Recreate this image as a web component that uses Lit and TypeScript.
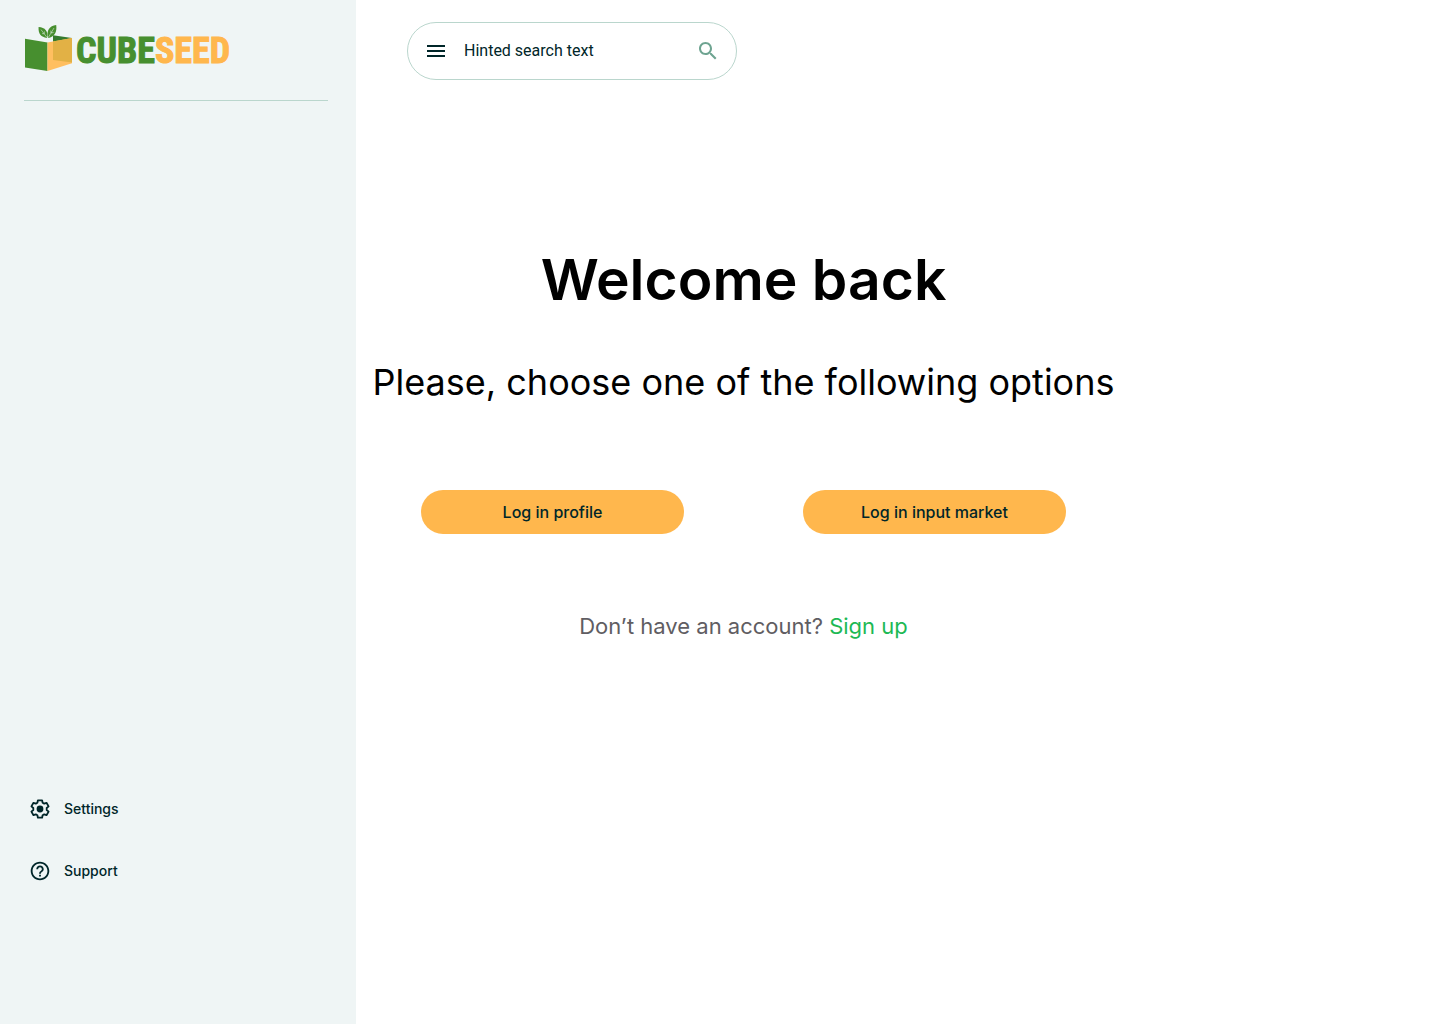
import { LitElement, html, css, svg } from "lit";
import { customElement } from "lit/decorators.js";

const logoMark = html`
  <svg class="mark" viewBox="-1 0 48 48" aria-hidden="true">
    <path fill="#357a2e" d="M28 11.2 L47 14 V39 L28 36 Z" />
    <path fill="#478f2f" d="M0 14.7 L22.5 18.4 V47 L0 43.6 Z" />
    <path fill="#ffbf60" d="M22.5 18.4 L47 14 V39.2 L22.5 47 Z" />
    <path fill="#e2b145" d="M28 17.4 L47 14 V38.5 L28 36 Z" />
    <path fill="#478f2f" d="M22 14 C16 13.2 13 9.5 13.6 3 C20 3.2 23.6 7.5 22 14 Z" />
    <path fill="#478f2f" d="M23 14 C21.2 6.5 24.5 1.6 31.2 1 C32.2 8 29.5 13 23 14 Z" />
    <path fill="none" stroke="#eff5f5" stroke-width=".5" d="M16 5.6 L22 13.5 M29 4 L23.3 13.5 M25.8 6.5 L26 9 L28.6 8.4 M17 9.6 L19.2 9.8 L19.4 7.4" />
  </svg>`;

const icons = {
  menu: svg`<path d="M3 18h18v-2H3v2zm0-5h18v-2H3v2zm0-7v2h18V6H3z"/>`,
  search: svg`<path d="M15.5 14h-.79l-.28-.27C15.41 12.59 16 11.11 16 9.5 16 5.91 13.09 3 9.5 3S3 5.91 3 9.5 5.91 16 9.5 16c1.61 0 3.09-.59 4.23-1.57l.27.28v.79l5 4.99L20.49 19l-4.99-5zm-6 0C7.01 14 5 11.99 5 9.5S7.01 5 9.5 5 14 7.01 14 9.5 11.99 14 9.5 14z"/>`,
  settings: svg`
    <g transform="translate(12 12)">
      <path fill="none" stroke="currentColor" stroke-width="1.8" stroke-linejoin="round"
        d="M-2.1 -8.7 H2.1 L2.6 -6.3 L4.2 -5.4 L6.5 -6.2 L8.6 -2.6 L6.7 -.95 V.95 L8.6 2.6 L6.5 6.2 L4.2 5.4 L2.6 6.3 L2.1 8.7 H-2.1 L-2.6 6.3 L-4.2 5.4 L-6.5 6.2 L-8.6 2.6 L-6.7 .95 V-.95 L-8.6 -2.6 L-6.5 -6.2 L-4.2 -5.4 L-2.6 -6.3 Z"/>
      <circle r="3.4"/>
    </g>`,
  help: svg`<g transform="translate(.84 .84) scale(.93)"><path d="M11 18h2v-2h-2v2zm1-16C6.48 2 2 6.48 2 12s4.48 10 10 10 10-4.48 10-10S17.52 2 12 2zm0 18c-4.41 0-8-3.59-8-8s3.59-8 8-8 8 3.59 8 8-3.59 8-8 8zm0-14c-2.21 0-4 1.79-4 4h2c0-1.1.9-2 2-2s2 .9 2 2c0 2-3 1.75-3 5h2c0-2.25 3-2.5 3-5 0-2.21-1.79-4-4-4z"/></g>`,
};

const icon = (name: keyof typeof icons) =>
  html`<svg class="icon" viewBox="0 0 24 24" aria-hidden="true">${icons[name]}</svg>`;

@customElement("app-root")
export class AppRoot extends LitElement {
  static styles = css`
    :host {
      display: block;
      font-family: Inter, "Liberation Sans", sans-serif;
      color: #000;
    }
    * {
      box-sizing: border-box;
    }
    .page {
      display: flex;
      min-height: 100vh;
      background: #fff;
    }
    .sidebar {
      display: flex;
      flex-direction: column;
      flex: 0 0 356px;
      padding: 24px 28px 129px 24px;
      background: #eff5f5;
    }
    .brand {
      display: flex;
      align-items: center;
      gap: 4px;
      padding-bottom: 28px;
      border-bottom: 1px solid #bad6cd;
      text-decoration: none;
    }
    .mark {
      width: 48px;
      height: 48px;
    }
    .wordmark {
      padding-top: 6px;
      font: 700 36px/40px "Roboto Condensed", "Liberation Sans Narrow", "Liberation Sans", sans-serif;
      color: #478f2f;
      -webkit-text-stroke: 1px currentColor;
    }
    .seed {
      color: #ffb74d;
    }
    .links {
      display: flex;
      flex-direction: column;
      gap: 14px;
      margin-top: auto;
    }
    .link {
      display: flex;
      align-items: center;
      gap: 12px;
      height: 48px;
      padding: 0 4px;
      font-size: 14px;
      line-height: 20px;
      font-weight: 500;
      color: #002629;
      text-decoration: none;
    }
    .icon {
      display: block;
      flex: none;
      width: 24px;
      height: 24px;
      fill: currentColor;
    }
    .main {
      display: flex;
      flex-direction: column;
      flex: 1;
      min-width: 0;
      padding: 22px 17px;
    }
    .search {
      display: flex;
      align-items: center;
      width: 100%;
      max-width: 330px;
      height: 58px;
      margin-left: 34px;
      padding: 0 16px;
      border: 1px solid #bad6cd;
      border-radius: 29px;
    }
    .icon-button {
      flex: none;
      padding: 0;
      border: 0;
      background: none;
      color: #002629;
      cursor: pointer;
    }
    .find {
      color: #6ea491;
    }
    .field {
      flex: 1;
      min-width: 0;
      padding: 0 16px;
      border: 0;
      outline: 0;
      background: none;
      font: 400 16px/24px Roboto, sans-serif;
      color: #002629;
    }
    .field::placeholder {
      color: #002629;
      opacity: 1;
    }
    .welcome {
      display: flex;
      flex-direction: column;
      align-items: center;
      max-width: 741px;
      padding-top: 164px;
      text-align: center;
    }
    .title {
      margin: 0;
      font-size: 57px;
      line-height: 72px;
      font-weight: 600;
    }
    .subtitle {
      margin: 38px 0 0;
      font-size: 36px;
      line-height: 56px;
      white-space: nowrap;
    }
    .actions {
      display: flex;
      justify-content: space-between;
      align-self: stretch;
      gap: 24px;
      margin-top: 80px;
      padding: 0 48px;
    }
    .action {
      flex: 0 1 263px;
      height: 44px;
      padding: 0 16px;
      border: 0;
      border-radius: 22px;
      background: #ffb74d;
      font: 500 16px/24px Inter, sans-serif;
      color: #002629;
      cursor: pointer;
    }
    .signup {
      margin: 76px 0 0;
      font-size: 22px;
      line-height: 32px;
      color: #605d62;
    }
    .signup-link {
      color: #1db954;
      text-decoration: none;
    }
  `;

  render() {
    return html`
      <div class="page">
        <aside class="sidebar">
          <a class="brand" href="#" aria-label="CUBESEED">
            ${logoMark}
            <span class="wordmark">CUBE<span class="seed">SEED</span></span>
          </a>
          <nav class="links">
            <a class="link" href="#settings">${icon("settings")}Settings</a>
            <a class="link" href="#support">${icon("help")}Support</a>
          </nav>
        </aside>
        <main class="main">
          <form class="search" role="search">
            <button class="icon-button" type="button" aria-label="Menu">${icon("menu")}</button>
            <input class="field" type="text" aria-label="Search" placeholder="Hinted search text" />
            <button class="icon-button find" type="button" aria-label="Search">${icon("search")}</button>
          </form>
          <section class="welcome">
            <h1 class="title">Welcome back</h1>
            <p class="subtitle">Please, choose one of the following options</p>
            <div class="actions">
              <button class="action" type="button">Log in profile</button>
              <button class="action" type="button">Log in input market</button>
            </div>
            <p class="signup">Don’t have an account? <a class="signup-link" href="#signup">Sign up</a></p>
          </section>
        </main>
      </div>
    `;
  }
}
